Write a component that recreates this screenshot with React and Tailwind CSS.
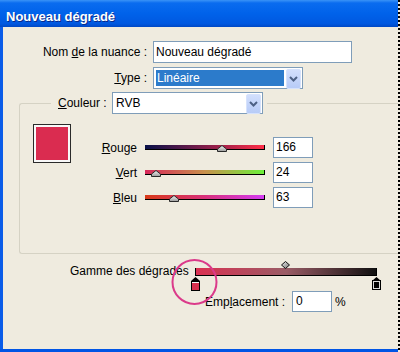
import React from "react";

const font = { fontFamily: '"Liberation Sans", Arial, sans-serif' };

function DropButton() {
  return (
    <div className="w-[15px] h-[20px] mt-[1px] mr-[1px] mb-[1px] rounded-[2px] border border-[#D6E2FC] bg-[linear-gradient(to_bottom,#D2DFFD,#B7CBF7)] flex items-center justify-center">
      <svg width="9" height="6" viewBox="0 0 9 6">
        <path d="M1 1 L4.5 4.5 L8 1" fill="none" stroke="#4D6185" strokeWidth="2" />
      </svg>
    </div>
  );
}

function Thumb({ left }) {
  return (
    <svg
      width="10"
      height="7"
      viewBox="0 0 10 7"
      className="absolute top-0"
      style={{ left: left - 5 }}
    >
      <defs>
        <linearGradient id="tg" x1="0" y1="0" x2="0" y2="1">
          <stop offset="0" stopColor="#F4F4F4" />
          <stop offset="1" stopColor="#9A9A9A" />
        </linearGradient>
      </defs>
      <polygon points="5,0.5 9.5,4 9.5,6.5 0.5,6.5 0.5,4" fill="url(#tg)" stroke="#2A2A2A" strokeWidth="1" />
    </svg>
  );
}

function Slider({ ul, rest, value, gradient }) {
  const pos = (value / 255) * 119;
  return (
    <div className="flex items-center h-[21px]">
      <div className="w-[66px] text-right text-[12px] leading-[14px] text-black">
        <u>{ul}</u>
        {rest}
      </div>
      <div className="relative ml-[8px] w-[120px] h-[5px]">
        <div className={`w-[120px] h-[5px] border-b border-r border-black ${gradient}`} />
        <Thumb left={pos} />
      </div>
      <div className="ml-[8px] w-[40px] h-[21px] border border-[#7F9DB9] bg-white text-[12px] leading-[19px] pl-[2px] text-black">
        {value}
      </div>
    </div>
  );
}

export default function App() {
  return (
    <div className="w-[400px] h-[352px] overflow-hidden relative flex bg-[#EFEBDF]" style={font}>
      <div className="w-[398px] h-[352px] flex flex-col">
        <div className="h-[27px] w-full bg-[linear-gradient(to_bottom,#3A93F7_0,#0A6CEF_3px,#0062EA_50%,#0058E0_88%,#0048C4_100%)] pl-[6px] pt-[9px]">
          <div className="text-white font-bold text-[13px] leading-[15px] [text-shadow:1px_1px_0_#0A2A8A]">
            Nouveau dégradé
          </div>
        </div>
        <div className="flex flex-1 min-h-0">
          <div className="w-[3px] h-full bg-[#0A5CE8]" />
          <div className="flex-1 flex flex-col text-black">
            {/* Nom de la nuance */}
            <div className="mt-[14px] flex items-center h-[22px]">
              <div className="w-[144px] text-right text-[12px] leading-[14px]">
                Nom <u>d</u>e la nuance :
              </div>
              <div className="ml-[6px] w-[199px] h-[22px] border border-[#7F9DB9] bg-white text-[12px] leading-[20px] pl-[2px]">
                Nouveau dégradé
              </div>
            </div>
            {/* Type */}
            <div className="mt-[4px] flex items-center h-[22px]">
              <div className="w-[144px] text-right text-[12px] leading-[14px]">
                <u>T</u>ype :
              </div>
              <div className="ml-[6px] w-[150px] h-[22px] border border-[#7F9DB9] bg-white flex">
                <div className="flex-1 m-[2px] bg-[#2C7BCB] text-white text-[12px] leading-[16px] pl-[1px]">
                  Linéaire
                </div>
                <DropButton />
              </div>
            </div>
            {/* Couleur group */}
            <fieldset className="mt-[3px] ml-[16px] border-l border-t border-b border-r-0 border-[#D5D2C4] rounded-l-[3px]">
              <legend className="ml-[31px] pl-[7px] pr-[4px]">
                <div className="flex items-center h-[22px]">
                  <div className="w-[54px] text-[12px] leading-[14px]">
                    <u>C</u>ouleur :
                  </div>
                  <div className="w-[151px] h-[22px] border border-[#7F9DB9] bg-white flex">
                    <div className="flex-1 text-[12px] leading-[20px] pl-[3px]">RVB</div>
                    <DropButton />
                  </div>
                </div>
              </legend>
              <div className="flex items-start pt-[10px] pl-[13px] pb-[45px]">
                <div className="w-[38px] h-[39px] border border-[#2A2A2A] bg-[#F8F8F8] p-[2px]">
                  <div className="w-full h-full bg-[#DA2C50]" />
                </div>
                <div className="mt-[13px] flex flex-col gap-[4px]">
                  <Slider
                    ul="R"
                    rest="ouge"
                    value={166}
                    gradient="bg-[linear-gradient(to_right,#081048,#8C1E4A_55%,#FF2E48)]"
                  />
                  <Slider
                    ul="V"
                    rest="ert"
                    value={24}
                    gradient="bg-[linear-gradient(to_right,#D8285A,#C8904C_50%,#6CF03A)]"
                  />
                  <Slider
                    ul="B"
                    rest="leu"
                    value={63}
                    gradient="bg-[linear-gradient(to_right,#D83A18,#D8307A_50%,#D43CF2)]"
                  />
                </div>
              </div>
            </fieldset>
            {/* Gamme des dégradés */}
            <div className="mt-[10px] ml-[67px] flex items-start">
              <div className="w-[125px] text-[12px] leading-[14px]">Gamme des dégrades</div>
              <div className="relative mt-[4px] w-[182px] h-[8px]">
                <div className="w-[182px] h-[8px] border-l border-b border-r border-black bg-[linear-gradient(to_right,#DA3152,#9A5C66_50%,#101010)]" />
                <svg width="9" height="8" viewBox="0 0 9 8" className="absolute left-[86px] top-[-7px]">
                  <defs>
                    <linearGradient id="dg" x1="0" y1="0" x2="1" y2="1">
                      <stop offset="0" stopColor="#F0F0F0" />
                      <stop offset="1" stopColor="#707070" />
                    </linearGradient>
                  </defs>
                  <polygon points="4.5,0.5 8.5,4 4.5,7.5 0.5,4" fill="url(#dg)" stroke="#111" strokeWidth="1" />
                </svg>
                <svg width="11" height="14" viewBox="0 0 11 14" className="absolute left-[-5px] top-[9px]">
                  <polygon points="5.5,0 10,4 1,4" fill="#000" />
                  <rect x="1.5" y="4.5" width="8" height="9" fill="#D8304F" stroke="#000" strokeWidth="1" />
                  <rect x="2" y="5" width="7" height="1" fill="#F4F4F4" />
                </svg>
                <svg width="11" height="13" viewBox="0 0 11 13" className="absolute left-[176px] top-[9px]">
                  <polygon points="5.5,0 10,4 1,4" fill="#000" />
                  <rect x="1.5" y="3.5" width="8" height="9" fill="#D8D8D8" stroke="#000" strokeWidth="1" />
                  <rect x="3" y="5" width="5" height="6" fill="#000" />
                </svg>
              </div>
            </div>
            {/* Emplacement */}
            <div className="mt-[13px] ml-[202px] flex items-center h-[21px]">
              <div className="text-[12px] leading-[14px]">
                Emp<u>l</u>acement :
              </div>
              <div className="ml-[7px] w-[40px] h-[21px] border border-[#7F9DB9] bg-white text-[12px] leading-[19px] pl-[3px]">
                0
              </div>
              <div className="ml-[3px] text-[12px] leading-[14px]">%</div>
            </div>
          </div>
        </div>
        <div className="h-[3px] w-full bg-[#0055E5]" />
      </div>
      <div className="w-[2px] h-[352px] bg-[repeating-linear-gradient(to_bottom,#000_0,#000_2px,transparent_2px,transparent_4px)]" />
      <svg width="48" height="48" viewBox="0 0 48 48" className="absolute left-[171px] top-[258px]">
        <circle cx="23.5" cy="24" r="22" fill="none" stroke="#DB3A8A" strokeWidth="2" />
      </svg>
    </div>
  );
}
